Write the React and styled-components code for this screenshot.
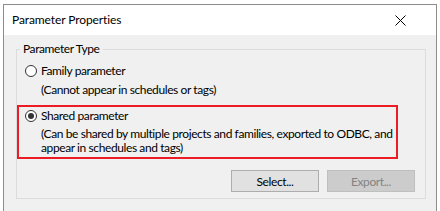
import React from 'react'
import styled, { createGlobalStyle } from 'styled-components';

const GlobalStyle = createGlobalStyle`
    html, body {
        margin: 0;
        padding: 0;
        background: #ffffff;
        overflow: hidden;
    }
    body {
        font-family: "Segoe UI", Lato, sans-serif;
        font-size: 12px;
        letter-spacing: -0.4px;
        color: #000000;
    }
`;

const App = () => {
  return (
    <>
        <GlobalStyle />
        <Window>
            <TitleBar>
                <Title>Parameter Properties</Title>
                <Close>
                    <svg width="11" height="11" viewBox="0 0 11 11">
                        <path d="M0.5 0.5 L10.5 10.5 M10.5 0.5 L0.5 10.5" stroke="#000" strokeWidth="1" fill="none" />
                    </svg>
                </Close>
            </TitleBar>
            <Body>
                <GroupBox>
                    <Legend>Parameter Type</Legend>
                    <Option>
                        <Row>
                            <Radio />
                            <Label>Family parameter</Label>
                        </Row>
                        <Hint $gap={4}>(Cannot appear in schedules or tags)</Hint>
                    </Option>
                    <Highlight>
                        <Row>
                            <Radio $checked />
                            <Label>Shared parameter</Label>
                        </Row>
                        <Hint $gap={3}>
                            (Can be shared by multiple projects and families, exported to ODBC, and<br />
                            appear in schedules and tags)
                        </Hint>
                    </Highlight>
                    <Buttons>
                        <Button>Select...</Button>
                        <Button $disabled>Export...</Button>
                    </Buttons>
                </GroupBox>
            </Body>
        </Window>
    </>
  )
}

export default App;

const Window = styled.div`
    margin: 4px 0 0 3px;
    width: 432px;
    height: 230px;
    border: 1px solid #8c8c8c;
    border-bottom: none;
    display: flex;
    flex-direction: column;
`;
const TitleBar = styled.div`
    height: 30px;
    background: #ffffff;
    display: flex;
    align-items: center;
    justify-content: space-between;
    padding: 0 30px 0 8px;
`;
const Title = styled.div`
    font-size: 12px;
    line-height: 16px;
    letter-spacing: -0.1px;
`;
const Close = styled.div`
    width: 11px;
    height: 11px;
    display: flex;
    svg { display: block; }
`;
const Body = styled.div`
    flex: 1;
    background: #f0f0f0;
    padding: 6px 10px 0 12px;
`;
const GroupBox = styled.fieldset`
    margin: 0;
    padding: 0 10px 6px 0;
    border: 1px solid #dcdcdc;
    min-width: 0;
`;
const Legend = styled.legend`
    margin-left: 3px;
    padding: 0 3px;
    line-height: 16px;
`;
const Option = styled.div`
    padding: 6px 0 0 8px;
`;
const Row = styled.div`
    display: flex;
    align-items: center;
    height: 16px;
`;
const Radio = styled.span`
    box-sizing: border-box;
    width: 12px;
    height: 12px;
    border: 1px solid #333333;
    border-radius: 50%;
    background: #ffffff;
    margin-right: 4px;
    display: flex;
    align-items: center;
    justify-content: center;
    &::after {
        content: '';
        display: ${p => (p.$checked ? 'block' : 'none')};
        width: 6px;
        height: 6px;
        border-radius: 50%;
        background: #333333;
    }
`;
const Label = styled.span`
    line-height: 16px;
`;
const Hint = styled.div`
    margin-top: ${p => p.$gap}px;
    padding-left: 16px;
    line-height: 14px;
    white-space: nowrap;
`;
const Highlight = styled.div`
    margin-top: 8px;
    width: 381px;
    box-sizing: border-box;
    border: 2px solid #ed1c24;
    padding: 1px 0 2px 6px;
`;
const Buttons = styled.div`
    display: flex;
    justify-content: flex-end;
    gap: 8px;
    margin-top: 11px;
`;
const Button = styled.div`
    box-sizing: border-box;
    width: 88px;
    height: 22px;
    display: flex;
    align-items: center;
    justify-content: center;
    background: ${p => (p.$disabled ? '#cccccc' : '#e1e1e1')};
    border: 1px solid ${p => (p.$disabled ? '#bfbfbf' : '#adadad')};
    color: ${p => (p.$disabled ? '#838383' : '#000000')};
`;
